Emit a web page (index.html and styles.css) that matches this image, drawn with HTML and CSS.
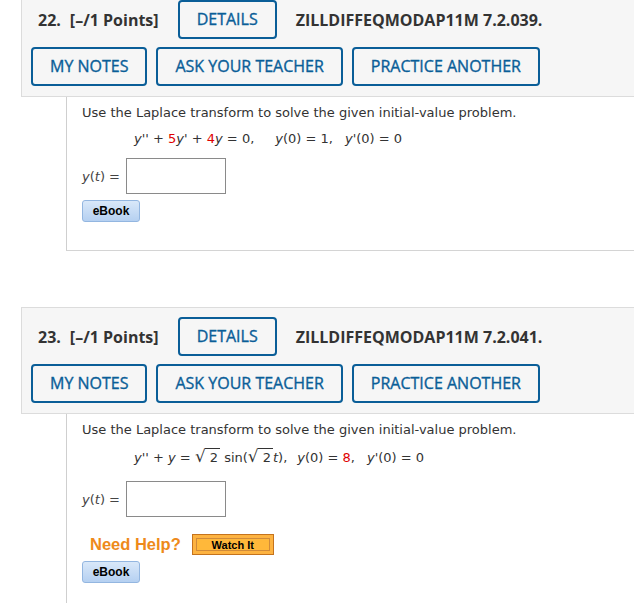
FILE: index.html
```html
<!DOCTYPE html>
<html>
<head>
<meta charset="utf-8">
<link rel="stylesheet" href="styles.css">
</head>
<body>
<div class="page">
  <section class="question q22">
    <div class="qhead">
      <div class="qrow">
        <span class="qnum">22.</span>
        <span class="qpts">[–/1 Points]</span>
        <button class="btn">DETAILS</button>
        <span class="qcode">ZILLDIFFEQMODAP11M 7.2.039.</span>
      </div>
      <div class="qrow">
        <button class="btn">MY NOTES</button>
        <button class="btn">ASK YOUR TEACHER</button>
        <button class="btn">PRACTICE ANOTHER</button>
      </div>
    </div>
    <div class="qbody">
      <p class="prompt">Use the Laplace transform to solve the given initial-value problem.</p>
      <p class="eq"><i>y''</i> + <span class="red">5</span><i>y'</i> + <span class="red">4</span><i>y</i> = 0,<span class="gap g-wide"></span><i>y</i>(0) = 1,<span class="gap g-mid"></span><i>y'</i>(0) = 0</p>
      <div class="answer">
        <span class="lbl"><i>y</i>(<i>t</i>) =</span>
        <span class="box"></span>
      </div>
      <button class="ebook">eBook</button>
    </div>
  </section>

  <section class="question q23">
    <div class="qhead">
      <div class="qrow">
        <span class="qnum">23.</span>
        <span class="qpts">[–/1 Points]</span>
        <button class="btn">DETAILS</button>
        <span class="qcode">ZILLDIFFEQMODAP11M 7.2.041.</span>
      </div>
      <div class="qrow">
        <button class="btn">MY NOTES</button>
        <button class="btn">ASK YOUR TEACHER</button>
        <button class="btn">PRACTICE ANOTHER</button>
      </div>
    </div>
    <div class="qbody">
      <p class="prompt">Use the Laplace transform to solve the given initial-value problem.</p>
      <p class="eq eq2"><i>y''</i> + <i>y</i> = <span class="rad"><span class="rsign">√</span><span class="rbody">2</span></span> sin(<span class="rad"><span class="rsign">√</span><span class="rbody">2</span></span><i>t</i>),<span class="gap g-small"></span><i>y</i>(0) = <span class="red">8</span>,<span class="gap g-mid"></span><i>y'</i>(0) = 0</p>
      <div class="answer answer2">
        <span class="lbl"><i>y</i>(<i>t</i>) =</span>
        <span class="box"></span>
      </div>
      <div class="help">
        <span class="needhelp">Need Help?</span>
        <button class="watch">Watch It</button>
      </div>
      <button class="ebook ebook2">eBook</button>
    </div>
  </section>
</div>
</body>
</html>
```

FILE: styles.css
```css
html, body {
  margin: 0;
  padding: 0;
  background: #fff;
  overflow: hidden;
}
.page {
  margin-top: -10px;
  width: 700px;
}
.question {
  margin-left: 21px;
}
.q23 {
  margin-top: 56px;
}
.qhead {
  background: #f6f6f6;
  border: 1px solid #dcdcdc;
  padding: 9px 9px 10px;
  display: flex;
  flex-direction: column;
  gap: 8px;
  font-family: "Open Sans", "Noto Sans", sans-serif;
  font-size: 16px;
}
.qrow {
  display: flex;
  align-items: center;
  gap: 9px;
}
.qnum, .qpts, .qcode {
  font-weight: 700;
  color: #333;
}
.qnum {
  margin-left: 7px;
}
.qpts {
  margin-right: 10px;
}
.qcode {
  margin-left: 10px;
}
.btn {
  font-family: "Open Sans", "Noto Sans", sans-serif;
  font-size: 16px;
  font-weight: 400;
  -webkit-text-stroke: 0.35px #0a5e98;
  color: #0a5e98;
  background: transparent;
  border: 2px solid #0a5e98;
  border-radius: 4px;
  height: 39px;
  padding: 0 17px;
  margin: 0;
  line-height: 35px;
  white-space: nowrap;
}
.qbody {
  margin-left: 45px;
  border-left: 1px solid #cfcfcf;
  border-bottom: 1px solid #d4d4d4;
  padding: 8px 0 28px 15px;
  font-family: "DejaVu Sans", Verdana, sans-serif;
  font-size: 13px;
  color: #333;
}
.q23 .qbody {
  border-bottom: none;
  padding-bottom: 40px;
}
.qbody i {
  font-style: italic;
}
.prompt {
  margin: 0;
  line-height: 16px;
}
.eq {
  margin: 10px 0 0 52px;
  line-height: 16px;
  white-space: nowrap;
}
.eq2 {
  margin-top: 9px;
  line-height: 18px;
}
.gap {
  display: inline-block;
}
.g-wide { width: 21px; }
.g-mid { width: 12px; }
.g-small { width: 10px; }
.red {
  color: #e00000;
}
.rad {
  display: inline-block;
  white-space: nowrap;
}
.rsign {
  font-size: 17px;
  margin-right: -1px;
}
.rbody {
  border-top: 1px solid #333;
  padding: 1px 2px 0 5px;
}
.answer {
  display: flex;
  align-items: center;
  gap: 6px;
  margin-top: 11px;
}
.answer2 {
  margin-top: 14px;
}
.lbl {
  color: #444;
}
.box {
  width: 98px;
  height: 34px;
  border: 1px solid #8a8a8a;
  background: #fff;
}
.ebook {
  display: block;
  margin-top: 6px;
  width: 58px;
  height: 22px;
  padding: 0;
  border: 1px solid #93b6e0;
  border-radius: 3px;
  background: linear-gradient(#d9e8f9, #b5d0f1);
  font-family: "Liberation Sans", Arial, sans-serif;
  font-weight: 700;
  font-size: 12px;
  color: #000;
}
.ebook2 {
  margin-top: 6px;
}
.help {
  display: flex;
  align-items: center;
  gap: 11px;
  margin-top: 17px;
  padding-left: 8px;
}
.needhelp {
  font-family: "Liberation Sans", Arial, sans-serif;
  font-weight: 700;
  font-size: 16.5px;
  color: #ee8a1a;
}
.watch {
  width: 82px;
  height: 21px;
  padding: 0;
  border: 1px solid #c5731d;
  background: #ffb83a;
  box-shadow: inset 0 0 0 3px #fdb341, inset 0 0 0 4px #cf8a3a;
  font-family: "Liberation Sans", Arial, sans-serif;
  font-weight: 700;
  font-size: 11px;
  color: #000;
}
```
